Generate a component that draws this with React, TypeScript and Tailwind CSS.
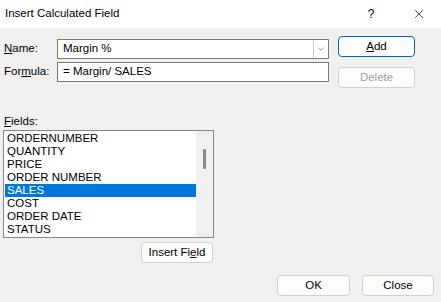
import { X, ChevronDown } from "lucide-react";

const FIELDS = [
  "ORDERNUMBER",
  "QUANTITY",
  "PRICE",
  "ORDER NUMBER",
  "SALES",
  "COST",
  "ORDER DATE",
  "STATUS",
];

function Btn({
  children,
  className = "",
  primary,
  disabled,
}: {
  children: React.ReactNode;
  className?: string;
  primary?: boolean;
  disabled?: boolean;
}) {
  return (
    <button
      type="button"
      className={
        "h-[21px] rounded-[4px] bg-[#fdfdfd] flex items-center justify-center leading-none " +
        (primary ? "border border-[#0067c0] " : "border border-[#d0d0d0] ") +
        (disabled ? "text-[#a0a0a0] " : "text-black ") +
        className
      }
    >
      {children}
    </button>
  );
}

export default function App() {
  return (
    <div
      className="w-[441px] h-[302px] bg-[#f0f0f0] flex flex-col text-[11.5px] text-black overflow-hidden"
      style={{ fontFamily: '"Liberation Sans", "Noto Sans", sans-serif' }}
    >
      {/* title bar */}
      <div className="h-[28px] bg-white flex items-center pl-[5px] shrink-0">
        <span className="flex-1">Insert Calculated Field</span>
        <span className="w-[12px] text-center mr-[35px] text-[12px]">?</span>
        <X className="w-[14px] h-[14px] mr-[15px]" strokeWidth={1.2} />
      </div>

      <div className="flex">
        <div className="flex flex-col pt-[11px] pl-[4px] gap-[3px]">
          <div className="flex items-center h-[20px]">
            <span className="w-[53px]">
              <span className="underline">N</span>ame:
            </span>
            <div className="w-[272px] h-[20px] border border-[#7a7a7a] bg-white flex items-center">
              <span className="flex-1 pl-[5px]">Margin %</span>
              <div className="w-[15px] h-[18px] border-l border-[#c8c8c8] flex items-center justify-center">
                <ChevronDown className="w-[10px] h-[10px] text-[#606060]" strokeWidth={1.5} />
              </div>
            </div>
          </div>
          <div className="flex items-center h-[20px]">
            <span className="w-[53px]">
              For<span className="underline">m</span>ula:
            </span>
            <div className="w-[272px] h-[20px] border border-[#7a7a7a] bg-white flex items-center">
              <span className="pl-[5px]">= Margin/ SALES</span>
            </div>
          </div>
        </div>
        <div className="ml-[9px] pt-[8px] flex flex-col gap-[10px]">
          <Btn primary className="w-[77px]">
            <span>
              <span className="underline">A</span>dd
            </span>
          </Btn>
          <Btn disabled className="w-[77px]">
            Delete
          </Btn>
        </div>
      </div>

      <div className="mt-[26px] pl-[4px] h-[14px] leading-[14px]">
        <span className="underline">F</span>ields:
      </div>

      <div className="ml-[3px] mt-[2px] w-[211px] h-[108px] border border-[#828790] bg-white flex">
        <div className="flex-1 pl-[1px] pt-[1px] flex flex-col">
          {FIELDS.map((f) => (
            <div
              key={f}
              className={
                "h-[13px] leading-[13px] pl-[2px] " +
                (f === "SALES" ? "bg-[#0078d7] text-white" : "")
              }
            >
              {f}
            </div>
          ))}
        </div>
        <div className="w-[17px] bg-[#f0f0f0] flex justify-center pt-[18px]">
          <div className="w-[3px] h-[20px] bg-[#8a8a8a] rounded-[1px]" />
        </div>
      </div>

      <div className="mt-[4px] ml-[141px]">
        <Btn className="w-[72px]">
          <span>
            Insert Fi<span className="underline">e</span>ld
          </span>
        </Btn>
      </div>

      <div className="mt-[12px] flex justify-end pr-[7px] gap-[12px]">
        <Btn className="w-[73px]">OK</Btn>
        <Btn className="w-[72px]">Close</Btn>
      </div>
    </div>
  );
}
